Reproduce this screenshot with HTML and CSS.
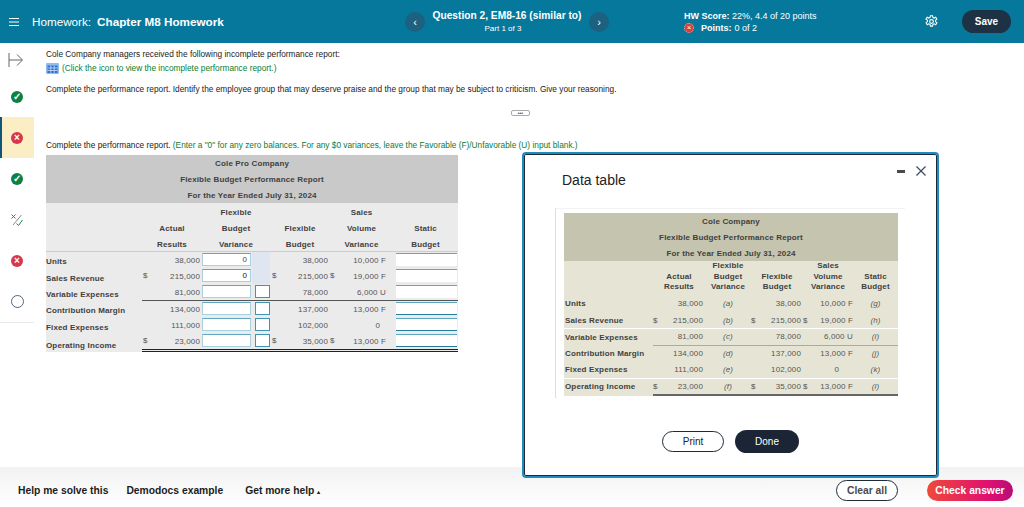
FILE: index.html
```html
<!DOCTYPE html>
<html lang="en">
<head>
<meta charset="utf-8">
<title>Homework: Chapter M8 Homework</title>
<link rel="stylesheet" href="styles.css">
</head>
<body>
<header class="topbar">
  <div class="brand">
    <svg class="burger" viewBox="0 0 10 8" width="10" height="8"><path d="M0 .5h10M0 4h10M0 7.500h10" stroke="#fff" stroke-width="1"/></svg>
    <span class="brand-label">Homework:</span><b class="brand-name">Chapter M8 Homework</b>
  </div>
  <button class="nav-btn">‹</button>
  <div class="question"><b>Question 2, EM8-16 (similar to)</b><span>Part 1 of 3</span></div>
  <button class="nav-btn">›</button>
  <div class="score">
    <div><b>HW Score:</b> 22%, 4.4 of 20 points</div>
    <div class="points"><span class="score-x">×</span><b>Points:</b> 0 of 2</div>
  </div>
  <svg class="gear" viewBox="0 0 24 24" width="13" height="13" fill="none" stroke="#fff" stroke-width="2"><circle cx="12" cy="12" r="3.500"/><path d="M10 1.500h4l.7 3.200 2.200 1 2.900-1.600 2.200 3.600-2.500 2.100v2.400l2.500 2.100-2.200 3.600-2.900-1.600-2.200 1-.7 3.200h-4l-.7-3.200-2.200-1-2.900 1.600-2.200-3.600 2.500-2.100v-2.400L1.800 7.700 4 4.100l2.900 1.600 2.200-1z"/></svg>
  <button class="save">Save</button>
</header>

<div class="body-row">
  <nav class="rail">
    <div class="rail-top"><svg viewBox="0 0 16 14" width="16" height="14" fill="none" stroke="#666" stroke-width="1"><path d="M1 0v14M1 7h13M9 1.500 14.500 7 9 12.500"/></svg></div>
    <div class="rail-item"><span class="dot ok">✓</span></div>
    <div class="rail-item active"><span class="dot bad">×</span></div>
    <div class="rail-item"><span class="dot ok">✓</span></div>
    <div class="rail-item"><svg viewBox="0 0 12 12" width="12" height="12" fill="none" stroke-width="1"><path d="M.5.5l4 4M4.500.5l-4 4" stroke="#d33"/><path d="M10.500 1 2 11" stroke="#8a8a8a"/><path d="M5.500 9.500l2 2L11.500 6" stroke="#1a8a45"/></svg></div>
    <div class="rail-item"><span class="dot bad">×</span></div>
    <div class="rail-item"><span class="dot open"></span></div>
  </nav>

  <main class="content">
    <p class="line-a">Cole Company managers received the following incomplete performance report:</p>
    <p class="line-b green"><svg class="grid-icon" viewBox="0 0 13 11" width="13" height="11"><rect width="13" height="11" rx="1" fill="#8fbdf0"/><path d="M1.500 2.500h10v7.500h-10z" fill="#2f6fd0"/><path d="M1.500 5h10M1.500 7.500h10M4.800 2.500v7.500M8.200 2.500v7.500" stroke="#cfe2fa" stroke-width=".8"/></svg>(Click the icon to view the incomplete performance report.)</p>
    <p class="line-c">Complete the performance report. Identify the employee group that may deserve praise and the group that may be subject to criticism. Give your reasoning.</p>
    <div class="more-row"><span class="more">•••</span></div>
    <p class="line-d">Complete the performance report. <span class="green">(Enter a "0" for any zero balances. For any $0 variances, leave the Favorable (F)/Unfavorable (U) input blank.)</span></p>

    <table class="report">
      <colgroup><col class="c1"><col class="c2"><col class="c3"><col class="c4"><col class="c5"><col class="c6"><col class="c7"><col class="c8"><col class="c9"><col class="c10"></colgroup>
      <thead>
        <tr class="title"><th colspan="10">Cole Pro Company</th></tr>
        <tr class="title"><th colspan="10">Flexible Budget Performance Report</th></tr>
        <tr class="title"><th colspan="10">For the Year Ended July 31, 2024</th></tr>
        <tr class="head"><th></th><th colspan="2"></th><th colspan="2">Flexible</th><th colspan="2"></th><th colspan="2">Sales</th><th></th></tr>
        <tr class="head"><th></th><th colspan="2">Actual</th><th colspan="2">Budget</th><th colspan="2">Flexible</th><th colspan="2">Volume</th><th>Static</th></tr>
        <tr class="head last"><th></th><th colspan="2">Results</th><th colspan="2">Variance</th><th colspan="2">Budget</th><th colspan="2">Variance</th><th>Budget</th></tr>
      </thead>
      <tbody>
        <tr><th>Units</th><td></td><td class="num">38,000</td><td><input class="cell" value="0"></td><td class="tint"></td><td></td><td class="num">38,000</td><td></td><td class="var">10,000 F</td><td><input class="cell wide"></td></tr>
        <tr><th>Sales Revenue</th><td>$</td><td class="num">215,000</td><td><input class="cell focus" value="0"></td><td class="tint"></td><td class="dollar">$</td><td class="num">215,000</td><td>$</td><td class="var">19,000 F</td><td><input class="cell wide"></td></tr>
        <tr class="rule"><th>Variable Expenses</th><td></td><td class="num">81,000</td><td><input class="cell"></td><td><input class="cell box"></td><td></td><td class="num">78,000</td><td></td><td class="var">6,000 U</td><td><input class="cell wide"></td></tr>
        <tr><th>Contribution Margin</th><td></td><td class="num">134,000</td><td><input class="cell"></td><td><input class="cell box"></td><td></td><td class="num">137,000</td><td></td><td class="var">13,000 F</td><td><input class="cell wide under"></td></tr>
        <tr><th>Fixed Expenses</th><td></td><td class="num">111,000</td><td><input class="cell"></td><td><input class="cell box"></td><td></td><td class="num">102,000</td><td></td><td class="var zero">0</td><td><input class="cell wide under"></td></tr>
        <tr class="total"><th>Operating Income</th><td>$</td><td class="num">23,000</td><td><input class="cell"></td><td><input class="cell box"></td><td class="dollar">$</td><td class="num">35,000</td><td>$</td><td class="var">13,000 F</td><td><input class="cell wide under"></td></tr>
      </tbody>
    </table>
  </main>
</div>

<footer class="footer">
  <a class="help">Help me solve this</a><a class="demo">Demodocs example</a><a class="more-help">Get more help<span class="caret">▴</span></a>
  <span class="spacer"></span>
  <button class="clear">Clear all</button>
  <button class="check">Check answer</button>
</footer>

<section class="modal">
  <div class="modal-tools"><span class="minimize"></span><svg viewBox="0 0 10 10" width="10" height="10" fill="none" stroke="#3b4a5c" stroke-width="1.200"><path d="M.5.5l9 9M9.500.5l-9 9"/></svg></div>
  <h2>Data table</h2>
  <div class="scroller">
    <table class="source">
      <colgroup><col class="s1"><col class="s2"><col class="s3"><col class="s4"><col class="s5"><col class="s6"><col class="s7"><col class="s8"><col class="s9"></colgroup>
      <thead>
        <tr class="title"><th colspan="9">Cole Company</th></tr>
        <tr class="title"><th colspan="9">Flexible Budget Performance Report</th></tr>
        <tr class="title"><th colspan="9">For the Year Ended July 31, 2024</th></tr>
        <tr class="head"><th></th><th colspan="2">Actual<br>Results</th><th>Flexible<br>Budget<br>Variance</th><th colspan="2">Flexible<br>Budget</th><th colspan="2">Sales<br>Volume<br>Variance</th><th>Static<br>Budget</th></tr>
      </thead>
      <tbody>
        <tr><th>Units</th><td></td><td class="num">38,000</td><td class="key">(a)</td><td></td><td class="num">38,000</td><td></td><td class="var">10,000 F</td><td class="key">(g)</td></tr>
        <tr class="white"><th>Sales Revenue</th><td>$</td><td class="num">215,000</td><td class="key">(b)</td><td>$</td><td class="num">215,000</td><td>$</td><td class="var">19,000 F</td><td class="key">(h)</td></tr>
        <tr class="grey"><th>Variable Expenses</th><td></td><td class="num">81,000</td><td class="key">(c)</td><td></td><td class="num">78,000</td><td></td><td class="var">6,000 U</td><td class="key">(i)</td></tr>
        <tr><th>Contribution Margin</th><td></td><td class="num">134,000</td><td class="key">(d)</td><td></td><td class="num">137,000</td><td></td><td class="var">13,000 F</td><td class="key">(j)</td></tr>
        <tr class="white"><th>Fixed Expenses</th><td></td><td class="num">111,000</td><td class="key">(e)</td><td></td><td class="num">102,000</td><td></td><td class="var zero">0</td><td class="key">(k)</td></tr>
        <tr class="total"><th>Operating Income</th><td>$</td><td class="num">23,000</td><td class="key">(f)</td><td>$</td><td class="num">35,000</td><td>$</td><td class="var">13,000 F</td><td class="key">(l)</td></tr>
      </tbody>
    </table>
  </div>
  <div class="modal-actions"><button class="print">Print</button><button class="done">Done</button></div>
</section>
</body>
</html>
```

FILE: styles.css
```css
* { box-sizing: border-box; }
html, body { margin: 0; height: 507px; overflow: hidden; }
body {
  position: relative;
  display: flex;
  flex-direction: column;
  background: #fff;
  color: #222;
  font-family: "Liberation Sans", Arial, sans-serif;
  font-size: 8.300px;
}
button { font-family: inherit; cursor: pointer; padding: 0; }
p { margin: 0; }

/* top bar */
.topbar { flex: 0 0 43px; display: flex; align-items: center; background: #05789b; color: #fff; }
.brand { width: 405px; display: flex; align-items: center; font-size: 11.700px; padding-left: 9px; }
.burger { margin-right: 13px; }
.brand-label { margin-right: 6px; }
.nav-btn { width: 20px; height: 20px; border-radius: 50%; border: 0; background: #1c6180; color: #fff; font-size: 11px; line-height: 18px; }
.question { width: 164px; display: flex; flex-direction: column; align-items: center; }
.question b { font-size: 10.200px; line-height: 13px; margin-top: -1px; }
.question span { font-size: 8px; line-height: 11px; margin-right: 8px; padding-top: 1px; }
.score { margin-left: 75px; width: 237px; font-size: 9px; line-height: 12px; }
.points { display: flex; align-items: center; gap: 1px; }
.points b { margin-right: 2px; }
.score-x { width: 10px; height: 10px; margin-right: 6px; border-radius: 50%; background: #d4403f; border: 1px dotted #f0b0b0; font-size: 8px; line-height: 8px; text-align: center; }
.gear { margin-left: 4px; margin-top: -1px; }
.save { margin-left: 24px; width: 49px; height: 23px; border: 0; border-radius: 12px; background: #1d3245; color: #fff; font-size: 10px; font-weight: 700; }

/* body */
.body-row { flex: 1; display: flex; min-height: 0; }
.rail { width: 34px; height: 280px; border-bottom: 1px solid #e8e8e8; flex: none; }
.rail-top { height: 33px; padding: 10px 0 0 8px; }
.rail-item { height: 41px; display: flex; align-items: center; justify-content: center; }
.rail-item.active { background: #fbeec4; border-left: 2px solid #10557a; padding-right: 2px; }
.dot { width: 12px; height: 12px; border-radius: 50%; color: #fff; font-size: 10px; font-weight: 700; line-height: 12px; text-align: center; }
.ok { background: #0d8043; }
.bad { background: #d7374a; }
.open { width: 13px; height: 13px; border: 1.500px solid #54657a; }

.content { flex: 1; padding: 6px 0 0 12px; min-width: 0; }
.line-a { line-height: 11px; }
.line-b { line-height: 13px; margin-top: 2px; display: flex; align-items: center; }
.grid-icon { margin-right: 3px; }
.green { color: #0a7d32; }
.line-c { line-height: 11px; margin-top: 9px; }
.more-row { margin-left: 465px; margin-top: 15px; height: 7px; display: flex; }
.more { width: 19px; height: 6px; border: 1px solid #aaa; border-radius: 2px; font-size: 5px; line-height: 4px; text-align: center; color: #444; }
.line-d { margin-top: 23px; line-height: 11px; }

/* shared tables */
table { border-collapse: collapse; table-layout: fixed; }
th, td { padding: 0; font-size: 8px; letter-spacing: .15px; }

.report { width: 412px; margin-top: 4px; background: #ebebeb; color: #3f3f3f; }
.report .c1 { width: 96px; } .report .c2 { width: 14px; } .report .c3 { width: 46px; }
.report .c4 { width: 50px; } .report .c5 { width: 18px; } .report .c6 { width: 12px; }
.report .c7 { width: 48px; } .report .c8 { width: 10px; } .report .c9 { width: 53px; } .report .c10 { width: 65px; }
.report .title th { height: 16px; padding-top: 1px; background: #c9c9c9; }
.report .head th { height: 16px; padding-top: 3px; }
.report .last th { border-bottom: 1px solid #ccc; }
.report tbody tr { height: 16.400px; }
.report tbody th { text-align: left; padding-top: 5px; }
.report td { color: #555; padding-left: 1px; }
.report .num { text-align: right; padding-right: 2px; padding-top: 2px; }
.report .num + td { padding: 0; }
.report .dollar { padding-left: 2px; }
.report .var { text-align: right; padding-right: 7px; padding-top: 2px; }
.report .zero { padding-right: 13px; }
.report .tint { background: #e0e6f1; }
.report .rule td { border-bottom: 1px solid #555; }
.report .rule th { border: 0; }
.report .total { height: 17.500px; }
.report .total td { border-bottom: 3px double #222; }
.report .total th { padding-top: 7px; }

.cell { display: block; width: 49px; height: 13px; padding: 0 3px; border: 1px solid #a9d0de; border-top-color: #5ea7c2; background: #fff; font: 8px "Liberation Sans", Arial, sans-serif; text-align: right; color: #444; outline: 0; }
.focus { border-top: 1px solid #6f93dd; color: #111; }
.box { width: 15px; border: 1px solid #3f93b3; margin-left: 2px; }
.wide { width: 61px; margin-left: 2px; border-width: 1px 0 0; }
.under { border-bottom: 1px solid #257a9c; }

/* footer */
.footer { flex: 0 0 40px; display: flex; align-items: center; padding: 6px 11px 0 18px; background: linear-gradient(#f2f2f2, #fff); font-size: 10.300px; font-weight: 700; color: #1c1c1c; }
.help { margin-right: 18px; }
.demo { margin-right: 22px; }
.caret { margin-left: 3px; font-size: 6px; }
.spacer { flex: 1; }
.clear { width: 62px; height: 21px; border: 1px solid #1d2a3a; border-radius: 11px; background: #fff; color: #4a4a4a; font-size: 10.300px; font-weight: 700; margin-right: 29px; }
.check { width: 86px; height: 21px; border: 0; border-radius: 11px; background: linear-gradient(90deg, #f04a3a, #e01070 70%, #b80d78); color: #fff; font-size: 10.300px; font-weight: 700; }

/* dialog */
.modal { position: absolute; left: 522px; top: 152px; width: 417px; height: 326px; background: #fff; border: 2px solid #1e8ac0; border-radius: 4px; box-shadow: inset 0 0 0 1px #1d2a3a; }
.modal-tools { position: absolute; right: 11px; top: 12px; display: flex; align-items: center; gap: 11px; }
.minimize { width: 8px; height: 3px; background: #4a4a4a; }
.modal h2 { position: absolute; left: 38px; top: 18px; margin: 0; font-size: 14px; font-weight: 400; color: #222; }
.scroller { position: absolute; left: 31px; top: 54px; width: 350px; height: 190px; padding: 4px 0 0 8px; border-left: 1px solid #ddd; border-top: 1px solid #f2f2f2; }
.source { width: 334px; background: #e6e5d5; color: #3f3f3f; }
.source .s1 { width: 89px; } .source .s2 { width: 12px; } .source .s3 { width: 40px; }
.source .s4 { width: 46px; } .source .s5 { width: 12px; } .source .s6 { width: 40px; }
.source .s7 { width: 10px; } .source .s8 { width: 40px; } .source .s9 { width: 45px; }
.source .title th { height: 16px; background: #c5c4ae; }
.source .head th { height: 34px; line-height: 10.500px; vertical-align: bottom; padding-bottom: 3px; }
.source tbody tr { height: 16.500px; }
.source tbody th { text-align: left; padding-left: 1px; }
.source td { color: #555; }
.source .num { text-align: right; padding-right: 2px; }
.source .key { text-align: center; font-style: italic; }
.source .var { text-align: right; white-space: nowrap; }
.source .zero { padding-right: 14px; }
.source .white th, .source .white td { border-bottom: 1px solid #fff; }
.source .grey td { border-bottom: 1px solid #aaa; }
.source .total td { border-bottom: 2px solid #666; }
.modal-actions { position: absolute; left: 138px; top: 276px; display: flex; align-items: center; gap: 11px; }
.print { width: 62px; height: 21px; border: 1px solid #1d2a3a; border-radius: 11px; background: #fff; color: #222; font-size: 10px; }
.done { width: 64px; height: 23px; border: 0; border-radius: 12px; background: #1c2535; color: #fff; font-size: 10px; }
```
